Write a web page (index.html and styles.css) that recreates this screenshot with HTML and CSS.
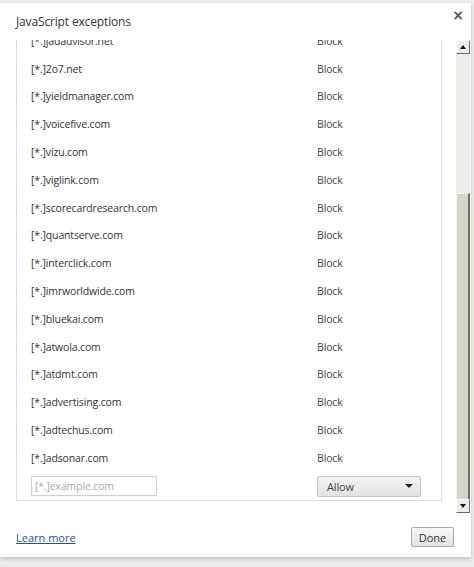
FILE: index.html
```html
<!DOCTYPE html>
<html>
<head>
<meta charset="utf-8">
<link rel="stylesheet" href="styles.css">
</head>
<body>
<div class="dialog">
  <div class="header">
    <div class="title">JavaScript exceptions</div>
    <div class="close">×</div>
  </div>
  <div class="body">
    <div class="viewport">
      <div class="list">
        <div class="row"><span class="pattern">[*.]jadadvisor.net</span><span class="setting">Block</span></div>
        <div class="row"><span class="pattern">[*.]2o7.net</span><span class="setting">Block</span></div>
        <div class="row"><span class="pattern">[*.]yieldmanager.com</span><span class="setting">Block</span></div>
        <div class="row"><span class="pattern">[*.]voicefive.com</span><span class="setting">Block</span></div>
        <div class="row"><span class="pattern">[*.]vizu.com</span><span class="setting">Block</span></div>
        <div class="row"><span class="pattern">[*.]viglink.com</span><span class="setting">Block</span></div>
        <div class="row"><span class="pattern">[*.]scorecardresearch.com</span><span class="setting">Block</span></div>
        <div class="row"><span class="pattern">[*.]quantserve.com</span><span class="setting">Block</span></div>
        <div class="row"><span class="pattern">[*.]interclick.com</span><span class="setting">Block</span></div>
        <div class="row"><span class="pattern">[*.]imrworldwide.com</span><span class="setting">Block</span></div>
        <div class="row"><span class="pattern">[*.]bluekai.com</span><span class="setting">Block</span></div>
        <div class="row"><span class="pattern">[*.]atwola.com</span><span class="setting">Block</span></div>
        <div class="row"><span class="pattern">[*.]atdmt.com</span><span class="setting">Block</span></div>
        <div class="row"><span class="pattern">[*.]advertising.com</span><span class="setting">Block</span></div>
        <div class="row"><span class="pattern">[*.]adtechus.com</span><span class="setting">Block</span></div>
        <div class="row"><span class="pattern">[*.]adsonar.com</span><span class="setting">Block</span></div>
        <div class="row new-row">
          <div class="pattern"><input class="input" type="text" placeholder="[*.]example.com"></div>
          <div class="select"><span>Allow</span><span class="arrow"></span></div>
        </div>
      </div>
    </div>
    <div class="scrollbar">
      <div class="sb-btn"><span class="tri-up"></span></div>
      <div class="sb-track"></div>
      <div class="sb-thumb"></div>
      <div class="sb-btn"><span class="tri-down"></span></div>
    </div>
  </div>
  <div class="footer">
    <a class="learn" href="#">Learn more</a>
    <div class="done">Done</div>
  </div>
</div>
</body>
</html>
```
FILE: styles.css
```css
html, body {
  margin: 0;
  padding: 0;
}
body {
  background: #ececec;
  width: 474px;
  height: 567px;
  overflow: hidden;
  font-family: "Open Sans", "Noto Sans", sans-serif;
  color: #333;
}
.dialog {
  margin-top: 3px;
  width: 471px;
  height: 554px;
  background: #fff;
  box-shadow: 0 2px 4px rgba(0,0,0,0.18);
  display: flex;
  flex-direction: column;
}
.header {
  height: 37px;
  display: flex;
  align-items: center;
  justify-content: space-between;
  padding-left: 16px;
  padding-right: 7px;
}
.title {
  font-size: 12px;
  letter-spacing: -0.15px;
  color: #333;
  margin-top: 0;
}
.close {
  font-family: "DejaVu Sans", sans-serif;
  font-size: 14px;
  font-weight: bold;
  color: #555;
  align-self: flex-start;
  margin-top: 4px;
}
.body {
  height: 473px;
  display: flex;
  padding-left: 16px;
}
.viewport {
  width: 440px;
  height: 473px;
  overflow: hidden;
  display: flex;
  flex-direction: column;
  justify-content: flex-end;
}
.list {
  width: 424px;
  border: 1px solid #ddd;
  border-top: none;
  margin-bottom: 12px;
  flex-shrink: 0;
}
.row {
  height: 27.8px;
  box-sizing: border-box;
  padding-bottom: 1px;
  display: flex;
  align-items: center;
  font-size: 10.5px;
  letter-spacing: -0.15px;
  color: #333;
}
.pattern {
  width: 300px;
  padding-left: 14px;
  box-sizing: border-box;
  flex-shrink: 0;
}
.setting {
  color: #444;
}
.new-row {
  padding-bottom: 0;
}
.input {
  width: 126px;
  height: 20px;
  box-sizing: border-box;
  border: 1px solid #cfcfcf;
  border-radius: 1px;
  padding: 0 3px;
  font-family: inherit;
  font-size: 10.5px;
  letter-spacing: -0.15px;
  margin: 0;
  outline: none;
}
.input::placeholder {
  color: #aaa;
}
.select {
  width: 104px;
  height: 21px;
  box-sizing: border-box;
  border: 1px solid #c4c4c4;
  border-radius: 2px;
  background: linear-gradient(#f4f4f4, #e2e2e2);
  display: flex;
  align-items: center;
  justify-content: space-between;
  padding: 0 7px 0 9px;
  font-size: 11px;
  color: #444;
}
.arrow {
  width: 0;
  height: 0;
  border-left: 4px solid transparent;
  border-right: 4px solid transparent;
  border-top: 4px solid #222;
}
.scrollbar {
  width: 14px;
  height: 473px;
  display: flex;
  flex-direction: column;
  background: #eeede9;
}
.sb-btn {
  height: 14px;
  box-sizing: border-box;
  background: #ecebe7;
  border: 1px solid #fff;
  border-right-color: #6b6b6b;
  border-bottom-color: #6b6b6b;
  display: flex;
  align-items: center;
  justify-content: center;
  flex-shrink: 0;
}
.tri-up {
  width: 0; height: 0;
  border-left: 3.5px solid transparent;
  border-right: 3.5px solid transparent;
  border-bottom: 4px solid #111;
}
.tri-down {
  width: 0; height: 0;
  border-left: 3.5px solid transparent;
  border-right: 3.5px solid transparent;
  border-top: 4px solid #111;
}
.sb-track {
  height: 139px;
  background: #efeeea;
  flex-shrink: 0;
}
.sb-thumb {
  flex: 1;
  background: #d8d5cd;
  border-left: 1px solid #f4f3ef;
  border-top: 1px solid #f4f3ef;
  border-right: 2px solid #6f6d68;
}
.footer {
  flex: 1;
  display: flex;
  align-items: center;
  justify-content: space-between;
  padding: 4px 17px 0 16px;
}
.learn {
  font-size: 11px;
  color: #1a4fb3;
  text-decoration: underline;
}
.done {
  width: 43px;
  height: 20px;
  box-sizing: border-box;
  border: 1px solid #a9a9a9;
  border-radius: 2px;
  background: linear-gradient(#f7f7f7, #e4e4e4);
  font-size: 11px;
  color: #333;
  display: flex;
  align-items: center;
  justify-content: center;
}
```
